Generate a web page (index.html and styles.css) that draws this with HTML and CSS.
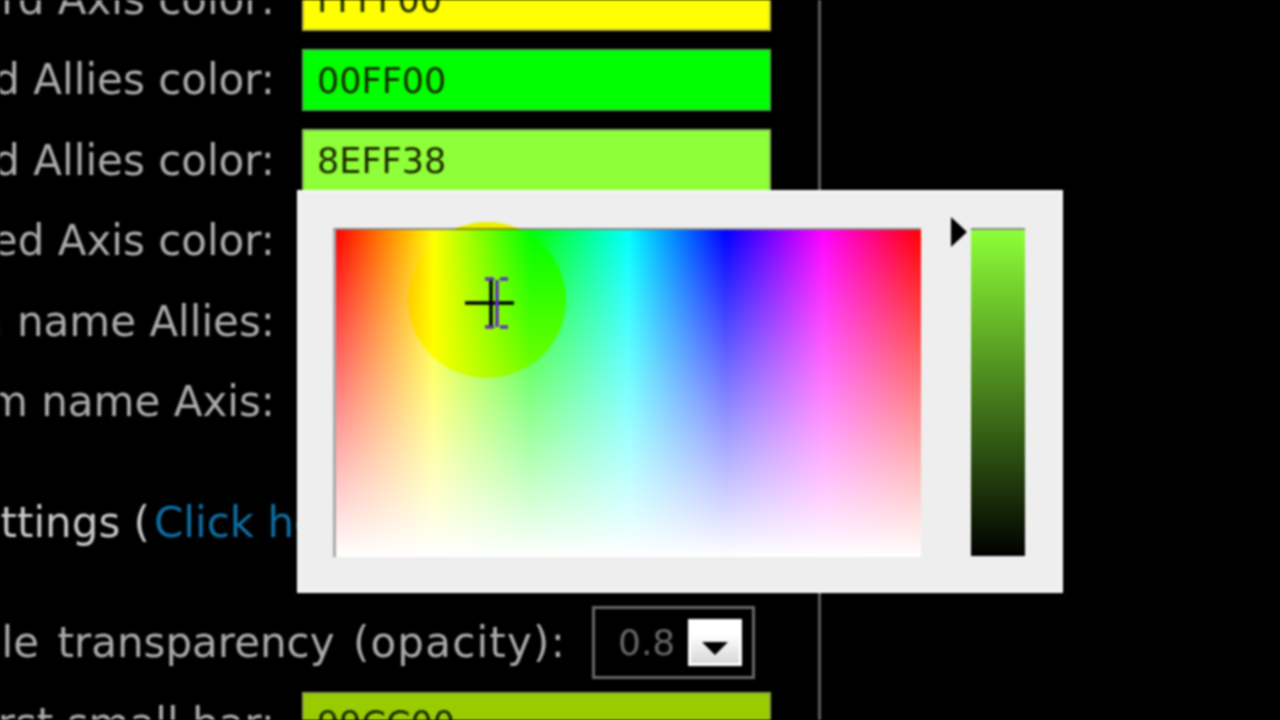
FILE: index.html
```html
<!DOCTYPE html>
<html lang="en">
<head>
<meta charset="utf-8">
<title>Colour settings</title>
<link rel="stylesheet" href="styles.css">
</head>
<body>
<main class="stage">
  <form class="form">
    <div class="row"><span class="label">Standard Axis color:</span><div class="swatch yellow">FFFF00</div></div>
    <div class="row"><span class="label">Standard Allies color:</span><div class="swatch green">00FF00</div></div>
    <div class="row"><span class="label">Wounded Allies color:</span><div class="swatch lime">8EFF38</div></div>
    <div class="row"><span class="label">Wounded Axis color:</span><div class="swatch plain"></div></div>
    <div class="row"><span class="label">Team name Allies:</span><div class="swatch plain"></div></div>
    <div class="row"><span class="label">Team name Axis:</span><div class="swatch plain"></div></div>
    <div class="row heading"><span class="head-text">Settings (<a class="link">Click here</a>)</span></div>
    <div class="row select-row">
      <span class="select-label">Table transparency <span class="paren">(opacity):</span></span>
      <div class="select"><span class="select-value">0.8</span><span class="select-btn"><svg class="select-arrow" viewBox="0 0 26 13"><polygon points="0,0 26,0 13,13"/></svg></span></div>
    </div>
    <div class="row"><span class="label">First small bar:</span><div class="swatch olive">99CC00</div></div>
  </form>

  <section class="panel">
    <div class="picker"></div>
    <svg class="pointer" viewBox="0 0 17 30"><polygon points="1,0 17,15 1,30"/></svg>
    <div class="slider"></div>
    <div class="glow"></div>
    <svg class="cursor" viewBox="0 0 50 52">
      <path class="cursor-black" d="M0 26H49M26 3V50"/>
      <path class="cursor-purple" d="M32 3V50M20 2H29M35 2H43M20 50H29M35 50H43"/>
    </svg>
  </section>
</main>
</body>
</html>
```
FILE: styles.css
```css
* { box-sizing: border-box; }

html, body {
  margin: 0;
  height: 100%;
  background: #000;
  overflow: hidden;
}

.stage {
  position: relative;
  width: 1280px;
  height: 720px;
  overflow: hidden;
  background: #000;
  filter: blur(0.8px);
  font-family: "DejaVu Sans", Verdana, sans-serif;
  font-size: 42px;
  color: #aaa;
}

.form {
  width: 1021px;
  margin: -32px 0 0 -200px;
  padding-bottom: 40px;
  border-right: 3px solid #5c5c5c;
  display: flex;
  flex-direction: column;
  gap: 18px;
}

.row {
  display: flex;
  align-items: center;
  height: 62.5px;
  flex: none;
}

.label {
  width: 475px;
  text-align: right;
  white-space: nowrap;
  flex: none;
}

.swatch {
  width: 469px;
  height: 62.5px;
  margin-left: 27px;
  padding: 2px 0 0 13px;
  display: flex;
  align-items: center;
  color: #1c2a00;
  font-size: 35px;
  border: 2px solid rgba(128, 128, 128, 0.55);
  flex: none;
}

.yellow { background: #ffff00; }
.green { background: #00ff00; }
.lime { background: #8eff38; }
.plain { background: #8eff38; }
.olive { background: #99cc00; }

.heading {
  margin-top: 40px;
  padding-left: 148px;
  color: #c8c8c8;
}

.head-text { white-space: nowrap; }

.link {
  margin-left: 4px;
  color: #0d6ea3;
}

.select-row {
  margin-top: 40px;
}

.select-label {
  width: 766px;
  text-align: right;
  white-space: nowrap;
  word-spacing: 5px;
  flex: none;
}

.paren { letter-spacing: 1.2px; }

.select {
  width: 163px;
  height: 73px;
  margin-left: 26px;
  padding: 0 10px 0 23px;
  display: flex;
  align-items: center;
  justify-content: space-between;
  border: 3px solid #666;
  flex: none;
}

.select-value {
  color: #666;
  font-size: 36px;
}

.select-btn {
  width: 54px;
  height: 47px;
  display: flex;
  align-items: flex-end;
  justify-content: center;
  padding-bottom: 8px;
  border: 3px solid #fff;
  background: linear-gradient(#fff 30%, #d8d8d8);
}

.select-arrow {
  width: 26px;
  height: 13px;
}

.panel {
  position: absolute;
  left: 297px;
  top: 190px;
  width: 766px;
  height: 403px;
  padding: 38px 0 0 38px;
  display: flex;
  align-items: flex-start;
  background: #eeeeee;
  border: 2px solid #fafafa;
  isolation: isolate;
}

.picker {
  width: 588px;
  height: 329px;
  flex: none;
  margin: -2px 0 0 -4px;
  border-top: 2px solid #888;
  border-left: 3px solid #aaa;
  background:
    linear-gradient(to bottom, rgba(255, 255, 255, 0), #fff),
    linear-gradient(to right, #f00 0%, #ff0 16.67%, #0f0 33.33%, #0ff 50%, #00f 66.67%, #f0f 83.33%, #f00 100%);
}

.pointer {
  width: 17px;
  height: 30px;
  margin: -13px 0 0 29px;
  flex: none;
}

.slider {
  width: 54px;
  height: 328px;
  margin: -2px 0 0 4px;
  flex: none;
  border-top: 2px solid #888;
  background: linear-gradient(#8eff38, #000);
}

.glow {
  position: absolute;
  left: 109px;
  top: 30px;
  width: 158px;
  height: 156px;
  border-radius: 50%;
  background: #ffff00;
  mix-blend-mode: multiply;
}

.cursor {
  position: absolute;
  left: 166px;
  top: 85px;
  width: 50px;
  height: 52px;
  fill: none;
  stroke-width: 3.5;
}

.cursor-black { stroke: #000; }
.cursor-purple { stroke: #6030c0; }
```
